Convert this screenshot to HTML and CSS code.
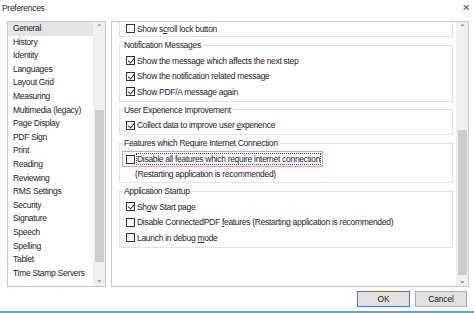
FILE: index.html
```html
<!DOCTYPE html>
<html>
<head>
<meta charset="utf-8">
<link rel="stylesheet" href="styles.css">
</head>
<body>
<div class="dialog">
  <div class="titlebar">
    <span class="title">Preferences</span>
    <span class="close">✕</span>
  </div>
  <div class="main">
    <div class="list">
      <ul class="items">
        <li class="sel">General</li>
        <li>History</li>
        <li>Identity</li>
        <li>Languages</li>
        <li>Layout Grid</li>
        <li>Measuring</li>
        <li>Multimedia (legacy)</li>
        <li>Page Display</li>
        <li>PDF Sign</li>
        <li>Print</li>
        <li>Reading</li>
        <li>Reviewing</li>
        <li>RMS Settings</li>
        <li>Security</li>
        <li>Signature</li>
        <li>Speech</li>
        <li>Spelling</li>
        <li>Tablet</li>
        <li>Time Stamp Servers</li>
      </ul>
      <div class="sbar left-sbar">
        <span class="arr">&#8963;</span>
        <div class="track"><div class="thumb thumb-l"></div></div>
        <span class="arr">&#8964;</span>
      </div>
    </div>
    <div class="panel">
      <div class="content">
        <div class="group first">
          <label class="row"><span class="cb"></span><span>Show s<u>c</u>roll lock button</span></label>
        </div>
        <fieldset class="group">
          <legend>Notification Messages</legend>
          <label class="row"><span class="cb on"></span><span>Show the message which affects the next step</span></label>
          <label class="row"><span class="cb on"></span><span>Show the notification related message</span></label>
          <label class="row"><span class="cb on"></span><span>Show PDF/A message again</span></label>
        </fieldset>
        <fieldset class="group">
          <legend>User Experience Improvement</legend>
          <label class="row"><span class="cb on"></span><span>Collect data to improve user <u>e</u>xperience</span></label>
        </fieldset>
        <fieldset class="group">
          <legend>Features which Require Internet Connection</legend>
          <label class="row hl"><span class="cb"></span><span class="focus">Disable all features which require internet connection</span></label>
          <div class="note">(Restarting application is recommended)</div>
        </fieldset>
        <fieldset class="group">
          <legend>Application Startup</legend>
          <label class="row"><span class="cb on"></span><span>Sh<u>o</u>w Start page</span></label>
          <label class="row"><span class="cb"></span><span>Disable ConnectedPDF <u>f</u>eatures (Restarting application is recommended)</span></label>
          <label class="row"><span class="cb"></span><span>Launch in debug <u>m</u>ode</span></label>
        </fieldset>
      </div>
      <div class="sbar right-sbar">
        <span class="arr">&#8963;</span>
        <div class="track"><div class="thumb thumb-r"></div></div>
        <span class="arr">&#8964;</span>
      </div>
    </div>
  </div>
  <div class="buttons">
    <button class="btn default">OK</button>
    <button class="btn">Cancel</button>
  </div>
  <div class="taskbar"></div>
</div>
</body>
</html>
```
FILE: styles.css
```css
* { box-sizing: border-box; }
html, body { margin: 0; padding: 0; }
body {
  width: 474px;
  height: 313px;
  overflow: hidden;
  background: #ffffff;
  font-family: "Liberation Sans", Arial, sans-serif;
  font-size: 8.5px;
  letter-spacing: -0.3px;
  color: #222;
}
.dialog {
  display: flex;
  flex-direction: column;
  height: 313px;
}
.titlebar {
  height: 21px;
  display: flex;
  justify-content: space-between;
  align-items: flex-start;
  padding: 2px 4px 0 2px;
}
.title { line-height: 12px; color: #222; }
.close { font-size: 10px; color: #555; line-height: 12px; letter-spacing: 0; }
.main {
  display: flex;
  gap: 5px;
  padding: 0 5px 0 7px;
  height: 266px;
}
.list {
  width: 99px;
  border: 1px solid #c9c9c9;
  display: flex;
}
.items {
  list-style: none;
  margin: 0;
  padding: 0;
  flex: 1;
}
.items li {
  height: 13.6px;
  line-height: 13.6px;
  padding-left: 5px;
  white-space: nowrap;
}
.items li.sel { background: #e5e5e5; }
.sbar {
  width: 12px;
  background: #f0f0f0;
  display: flex;
  flex-direction: column;
  align-items: center;
}
.arr {
  height: 12px;
  line-height: 12px;
  font-size: 8px;
  color: #606060;
  letter-spacing: 0;
}
.track { flex: 1; width: 100%; display: flex; flex-direction: column; }
.thumb { background: #cdcdcd; width: 9px; margin: 0 auto; }
.thumb-l { margin-top: 76px; height: 152px; }
.thumb-r { margin-top: 96px; height: 145px; }
.panel {
  flex: 1;
  border: 1px solid #c9c9c9;
  display: flex;
}
.content {
  flex: 1;
  padding: 0 3px 0 7px;
  overflow: hidden;
}
.group {
  margin: 0;
  border: 1px solid #e2e2e2;
  padding: 0 0 1px 6px;
  min-width: 0;
}
.group.first {
  border-top: none;
  padding-bottom: 1px;
  margin-bottom: 2px;
}
fieldset.group { margin-bottom: 2px; padding-top: 2px; }
legend {
  padding: 0 1px;
  margin-left: -3px;
  line-height: 12px;
  color: #222;
}
.row {
  display: flex;
  align-items: center;
  height: 15.5px;
  white-space: nowrap;
}
.first .row { height: 13px; }
.cb {
  width: 9px;
  height: 9px;
  border: 1px solid #333;
  background: #fff;
  margin-right: 2px;
  flex: none;
  position: relative;
}
.cb.on::after {
  content: "";
  position: absolute;
  left: 2px;
  top: 0px;
  width: 3px;
  height: 5px;
  border: solid #333;
  border-width: 0 1px 1px 0;
  transform: rotate(40deg);
}
.hl {
  border: 1px solid #e99aa8;
  margin-left: -4px;
  padding: 0 2px 0 3px;
  width: fit-content;
  height: 16px;
}
.focus { outline: 1px dotted #444; outline-offset: 0; line-height: 10px; }
.note {
  height: 14px;
  line-height: 14px;
  padding-left: 9px;
}
.buttons {
  display: flex;
  justify-content: flex-end;
  gap: 5px;
  padding: 4px 7px 0 0;
  height: 24px;
}
.btn {
  font-family: "Liberation Sans", Arial, sans-serif;
  font-size: 8.5px;
  letter-spacing: -0.2px;
  color: #222;
  background: #e1e1e1;
  border: 1px solid #adadad;
  width: 52px;
  height: 16px;
  padding: 0;
}
.btn.default { border: 1px solid #3c7fb1; width: 53px; }
.taskbar {
  height: 2px;
  margin-top: auto;
  background: #5aa2dc;
}
```
